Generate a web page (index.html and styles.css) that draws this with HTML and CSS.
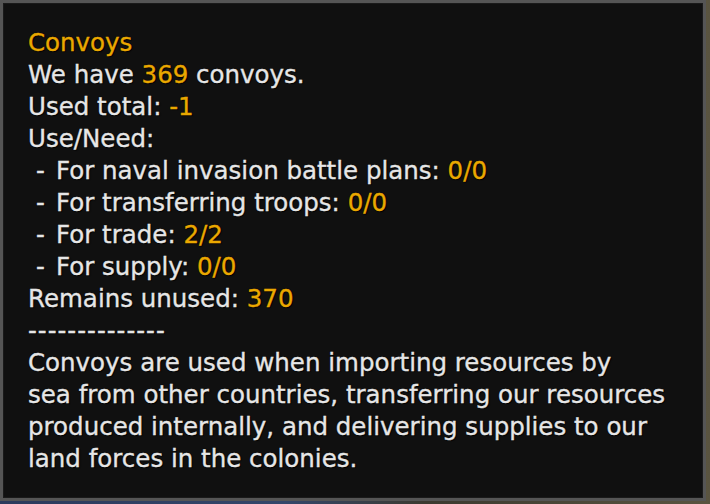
FILE: index.html
```html
<!DOCTYPE html>
<html>
<head>
<meta charset="utf-8">
<link rel="stylesheet" href="styles.css">
</head>
<body>
<div class="scene">
  <div class="tooltip">
    <div class="line title">Convoys</div>
    <div class="line">We have <span class="hl">369</span> convoys.</div>
    <div class="line">Used total: <span class="hl">-1</span></div>
    <div class="line">Use/Need:</div>
    <div class="line item"><span class="dash">-</span>For naval invasion battle plans: <span class="hl">0/0</span></div>
    <div class="line item"><span class="dash">-</span>For transferring troops: <span class="hl">0/0</span></div>
    <div class="line item"><span class="dash">-</span>For trade: <span class="hl">2/2</span></div>
    <div class="line item"><span class="dash">-</span>For supply: <span class="hl">0/0</span></div>
    <div class="line">Remains unused: <span class="hl">370</span></div>
    <div class="line sep">--------------</div>
    <div class="line">Convoys are used when importing resources by</div>
    <div class="line">sea from other countries, transferring our resources</div>
    <div class="line">produced internally, and delivering supplies to our</div>
    <div class="line">land forces in the colonies.</div>
  </div>
</div>
</body>
</html>
```
FILE: styles.css
```css
html, body {
  margin: 0;
  padding: 0;
}
body {
  width: 710px;
  height: 504px;
  overflow: hidden;
  background: linear-gradient(90deg, #2c3a5c 0%, #34466a 40%, #3c3a30 60%, #5a5440 100%);
}
.scene {
  width: 710px;
  height: 504px;
  display: flex;
  align-items: flex-start;
  justify-content: flex-start;
}
.tooltip {
  box-sizing: border-box;
  width: 706px;
  height: 501px;
  background: #101010;
  border: 3px solid #555555;
  box-shadow: inset 0 0 0 1px #1a1a1a;
  padding: 24px 0 0 25px;
  font-family: "DejaVu Sans", sans-serif;
  font-size: 24.5px;
  line-height: 32px;
  color: #e6e6e6;
  text-shadow: 1px 1px 1px #000, 0 0 1px #000;
  -webkit-text-stroke: 0.35px #e6e6e6;
  white-space: nowrap;
}
.title,
.hl {
  color: #eaa800;
  -webkit-text-stroke-color: #eaa800;
}
.item .dash {
  display: inline-block;
  width: 28px;
  padding-left: 8px;
  box-sizing: border-box;
}
.sep {
  letter-spacing: 1px;
}
```
